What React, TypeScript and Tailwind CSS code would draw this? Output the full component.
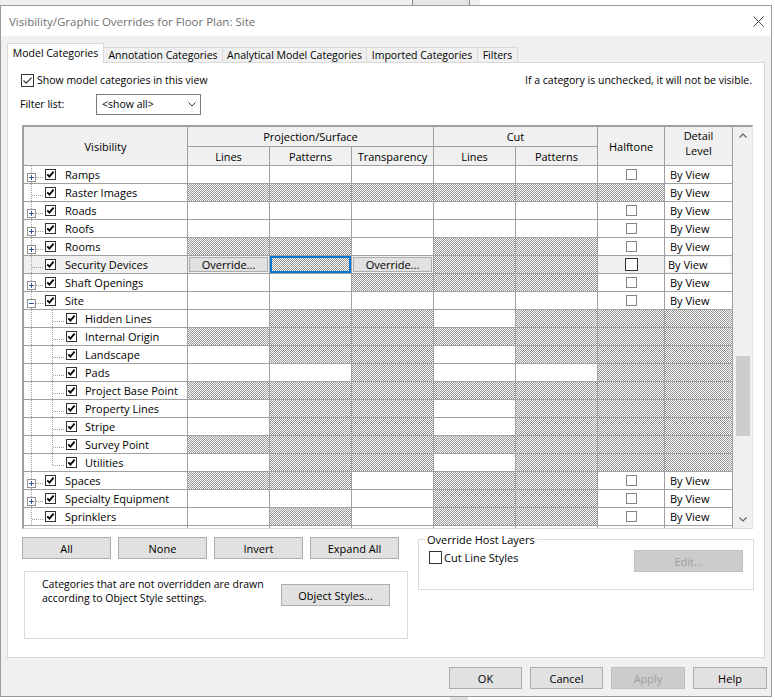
import React from "react";

const HATCH =
  "[background-image:repeating-conic-gradient(#969696_0%_25%,#ffffff_0%_50%)] [background-size:2px_2px]";
const COLS =
  "grid grid-cols-[164px_82px_82px_82px_82px_82px_67px_68px]";

interface Row {
  name: string;
  level: 0 | 1;
  toggle?: "+" | "-";
  fills: string; // proj lines, proj patterns, transparency, cut lines, cut patterns
  halftone: "box" | "h";
  detail: boolean;
  last?: boolean;
  focus?: boolean;
}

const ROWS: Row[] = [
  { name: "Ramps", level: 0, toggle: "+", fills: "wwwww", halftone: "box", detail: true },
  { name: "Raster Images", level: 0, fills: "hhhhh", halftone: "h", detail: true },
  { name: "Roads", level: 0, toggle: "+", fills: "wwwww", halftone: "box", detail: true },
  { name: "Roofs", level: 0, toggle: "+", fills: "wwwww", halftone: "box", detail: true },
  { name: "Rooms", level: 0, toggle: "+", fills: "hhwhh", halftone: "box", detail: true },
  { name: "Security Devices", level: 0, fills: "whwhh", halftone: "box", detail: true, focus: true },
  { name: "Shaft Openings", level: 0, toggle: "+", fills: "wwhhh", halftone: "box", detail: true },
  { name: "Site", level: 0, toggle: "-", fills: "wwwww", halftone: "box", detail: true },
  { name: "Hidden Lines", level: 1, fills: "whhwh", halftone: "h", detail: false },
  { name: "Internal Origin", level: 1, fills: "hhhhh", halftone: "h", detail: false },
  { name: "Landscape", level: 1, fills: "whhwh", halftone: "h", detail: false },
  { name: "Pads", level: 1, fills: "wwhww", halftone: "h", detail: false },
  { name: "Project Base Point", level: 1, fills: "hhhhh", halftone: "h", detail: false },
  { name: "Property Lines", level: 1, fills: "whhwh", halftone: "h", detail: false },
  { name: "Stripe", level: 1, fills: "whhwh", halftone: "h", detail: false },
  { name: "Survey Point", level: 1, fills: "hhhhh", halftone: "h", detail: false },
  { name: "Utilities", level: 1, fills: "whhwh", halftone: "h", detail: false, last: true },
  { name: "Spaces", level: 0, toggle: "+", fills: "hhwhh", halftone: "box", detail: true },
  { name: "Specialty Equipment", level: 0, toggle: "+", fills: "wwwhh", halftone: "box", detail: true },
  { name: "Sprinklers", level: 0, fills: "whwhh", halftone: "box", detail: true },
];

function TreeCheck() {
  return (
    <span className="flex h-[11px] w-[11px] shrink-0 items-center justify-center border border-[#333333] bg-white">
      <svg width="9" height="9" viewBox="0 0 9 9" fill="none">
        <path d="M1.3 4.4 L3.4 6.6 L7.6 1.6" stroke="#000" strokeWidth="1.8" />
      </svg>
    </span>
  );
}

function TreeLines({ row }: { row: Row }) {
  const dot = { stroke: "#a0a0a0", strokeDasharray: "1 1" };
  const y = 11.5;
  return (
    <svg
      className="pointer-events-none absolute left-0 top-0"
      width="44"
      height="17"
      viewBox="0 0 44 17"
      fill="none"
    >
      <line x1="7.5" y1="0" x2="7.5" y2="17" {...dot} />
      {row.level === 0 && <line x1={row.toggle ? 12 : 8} y1={y} x2="20" y2={y} {...dot} />}
      {row.level === 1 && (
        <>
          <line x1="28.5" y1="0" x2="28.5" y2={row.last ? y : 17} {...dot} />
          <line x1="29" y1={y} x2="41" y2={y} {...dot} />
        </>
      )}
      {row.toggle === "-" && <line x1="28.5" y1="15" x2="28.5" y2="17" {...dot} />}
      {row.toggle && (
        <g>
          <rect x="3.5" y="7.5" width="8" height="8" fill="#fff" stroke="#919191" />
          <line x1="5" y1="11.5" x2="10" y2="11.5" stroke="#2b5797" />
          {row.toggle === "+" && <line x1="7.5" y1="9" x2="7.5" y2="14" stroke="#2b5797" />}
        </g>
      )}
    </svg>
  );
}

function OverrideButton() {
  return (
    <div className="flex h-full items-center justify-center border border-[#adadad] bg-[#e1e1e1]">
      Override...
    </div>
  );
}

const CELL = "border-r border-b border-[#a0a0a0]";

function GridRow({ row }: { row: Row }) {
  const f = row.fills.split("");

  if (row.focus) {
    return (
      <div className={`${COLS} h-[18px]`}>
        <div className={`${CELL} relative flex items-center bg-[#f0f0f0] pl-[21px]`}>
          <TreeLines row={row} />
          <TreeCheck />
          <span className="ml-[9px] whitespace-nowrap">{row.name}</span>
        </div>
        <div className={`${CELL} bg-[#f0f0f0] p-px`}>
          <OverrideButton />
        </div>
        <div className={`${CELL} bg-white`}>
          <div className={`h-full border-2 border-[#0078d7] ${HATCH}`} />
        </div>
        <div className={`${CELL} bg-[#f0f0f0] p-px`}>
          <OverrideButton />
        </div>
        <div className={`${CELL} ${HATCH}`} />
        <div className={`${CELL} ${HATCH}`} />
        <div className={`${CELL} flex items-center justify-center bg-[#f0f0f0]`}>
          <span className="h-[13px] w-[13px] border border-[#333333] bg-white" />
        </div>
        <div className={`${CELL} bg-[#f0f0f0] py-px pl-px pr-[2px]`}>
          <div className="flex h-full items-center bg-white pl-[2px]">By View</div>
        </div>
      </div>
    );
  }

  return (
    <div className={`${COLS} h-[18px]`}>
      <div
        className={`${CELL} relative flex items-center bg-white ${
          row.level === 0 ? "pl-[21px]" : "pl-[42px]"
        }`}
      >
        <TreeLines row={row} />
        <TreeCheck />
        <span className={`whitespace-nowrap ${row.level === 0 ? "ml-[9px]" : "ml-[8px]"}`}>
          {row.name}
        </span>
      </div>
      {f.map((c, i) => (
        <div key={i} className={`${CELL} ${c === "h" ? HATCH : "bg-white"}`} />
      ))}
      {row.halftone === "box" ? (
        <div className={`${CELL} flex items-center justify-center bg-white`}>
          <span className="h-[11px] w-[11px] border border-[#858585] bg-white" />
        </div>
      ) : (
        <div className={`${CELL} ${HATCH}`} />
      )}
      {row.detail ? (
        <div className={`${CELL} flex items-center bg-white pl-[5px]`}>By View</div>
      ) : (
        <div className={`${CELL} ${HATCH}`} />
      )}
    </div>
  );
}

function HeadCell({ className = "", children }: { className?: string; children: React.ReactNode }) {
  return (
    <div
      className={`flex justify-center border-r border-b border-[#a0a0a0] text-center ${className}`}
    >
      {children}
    </div>
  );
}

function Chevron({ up }: { up?: boolean }) {
  return (
    <svg width="8" height="5" viewBox="0 0 8 5" fill="none">
      <path
        d={up ? "M0.5 4.5 L4 1 L7.5 4.5" : "M0.5 0.5 L4 4 L7.5 0.5"}
        stroke="#606060"
        strokeWidth="1.2"
      />
    </svg>
  );
}

function CategoryGrid() {
  return (
    <div className="ml-[14px] mt-[10px] flex h-[404px] w-[731px] border-l-2 border-t-2 border-r border-b border-l-[#a0a0a0] border-t-[#a0a0a0] border-r-[#e3e3e3] border-b-[#d8d8d8]">
      <div className="w-[709px]">
        <div className={`${COLS} grid-rows-[20px_19px] bg-[#f0f0f0]`}>
          <HeadCell className="row-span-2 items-center">Visibility</HeadCell>
          <HeadCell className="col-span-3 items-center">Projection/Surface</HeadCell>
          <HeadCell className="col-span-2 items-center">Cut</HeadCell>
          <HeadCell className="row-span-2 items-center">Halftone</HeadCell>
          <HeadCell className="row-span-2 items-start pt-px leading-[15px]">
            Detail
            <br />
            Level
          </HeadCell>
          <HeadCell className="items-center">Lines</HeadCell>
          <HeadCell className="items-center">Patterns</HeadCell>
          <HeadCell className="items-center">Transparency</HeadCell>
          <HeadCell className="items-center">Lines</HeadCell>
          <HeadCell className="items-center">Patterns</HeadCell>
        </div>
        <div className="h-[362px] overflow-hidden bg-white">
          {ROWS.map((r) => (
            <GridRow key={r.name} row={r} />
          ))}
          <div className={`${COLS} h-[18px]`}>
            {Array.from({ length: 8 }).map((_, i) => (
              <div key={i} className={`${CELL} bg-white`} />
            ))}
          </div>
        </div>
      </div>
      <div className="flex w-[19px] flex-col bg-[#f0f0f0]">
        <div className="flex h-[17px] items-center justify-center">
          <Chevron up />
        </div>
        <div className="flex-1 pt-[212px]">
          <div className="ml-[3px] h-[80px] w-[14px] bg-[#cdcdcd]" />
        </div>
        <div className="flex h-[17px] items-center justify-center">
          <Chevron />
        </div>
      </div>
    </div>
  );
}

function Btn({
  children,
  className = "",
  disabled,
}: {
  children: React.ReactNode;
  className?: string;
  disabled?: boolean;
}) {
  return (
    <div
      className={`flex h-[22px] items-center justify-center border ${
        disabled
          ? "border-[#bfbfbf] bg-[#cccccc] text-[#a0a0a0]"
          : "border-[#adadad] bg-[#e1e1e1] text-black"
      } ${className}`}
    >
      {children}
    </div>
  );
}

const TABS = [
  { label: "Annotation Categories", w: "w-[119px]" },
  { label: "Analytical Model Categories", w: "w-[144px]" },
  { label: "Imported Categories", w: "w-[111px]" },
  { label: "Filters", w: "w-[40px]" },
];

function Panel() {
  return (
    <div className="flex h-[596px] w-[758px] flex-col border border-[#d9d9d9] bg-white">
      <div className="mt-[10px] flex h-[14px] items-center pl-[13px] pr-[12px] text-[10.5px]">
        <span className="flex h-[13px] w-[13px] items-center justify-center border border-[#333333] bg-white">
          <svg width="11" height="11" viewBox="0 0 11 11" fill="none">
            <path d="M1.5 5.5 L4.2 8.2 L9.6 2.6" stroke="#333" strokeWidth="1.1" />
          </svg>
        </span>
        <span className="ml-[3px]">Show model categories in this view</span>
        <span className="ml-auto">If a category is unchecked, it will not be visible.</span>
      </div>
      <div className="mt-[7px] flex h-[21px] items-center pl-[12px] text-[10.5px]">
        <span className="w-[76px]">Filter list:</span>
        <div className="flex h-[21px] w-[105px] items-center justify-between border border-[#7a7a7a] bg-white pl-[5px] pr-[4px]">
          <span>&lt;show all&gt;</span>
          <svg width="8" height="5" viewBox="0 0 8 5" fill="none">
            <path d="M0.5 0.5 L4 4 L7.5 0.5" stroke="#333" strokeWidth="1" />
          </svg>
        </div>
      </div>
      <CategoryGrid />
      <div className="ml-[14px] flex items-start">
        <div className="w-[386px]">
          <div className="mt-[8px] flex gap-[7px]">
            <Btn className="w-[89px]">All</Btn>
            <Btn className="w-[89px]">None</Btn>
            <Btn className="w-[89px]">Invert</Btn>
            <Btn className="w-[89px]">Expand All</Btn>
          </div>
          <div className="ml-[2px] mt-[12px] flex h-[68px] w-[384px] border border-[#dcdcdc] pl-[17px] pr-[17px] pt-[6px]">
            <div className="flex flex-col gap-px whitespace-nowrap text-[10.5px] leading-[13px]">
              <span>Categories that are not overridden are drawn</span>
              <span>according to Object Style settings.</span>
            </div>
            <Btn className="ml-auto mt-[6px] w-[109px]">Object Styles...</Btn>
          </div>
        </div>
        <div className="relative ml-[10px] mt-[10px] flex h-[51px] w-[336px] items-start border border-[#dcdcdc] pl-[10px] pr-[10px] pt-[11px]">
          <span className="absolute left-[6px] top-[-7px] bg-white px-[2px]">Override Host Layers</span>
          <span className="h-[13px] w-[13px] border border-[#333333] bg-white" />
          <span className="ml-[2px]">Cut Line Styles</span>
          <Btn disabled className="ml-auto mt-[-1px] w-[109px]">
            Edit...
          </Btn>
        </div>
      </div>
    </div>
  );
}

function Dialog() {
  return (
    <div className="flex h-[692px] w-[772px] flex-col border border-[#9b9b9b] bg-[#f0f0f0]">
      <div className="flex h-[30px] items-center justify-between bg-white pl-[8px] pr-[7px]">
        <span className="text-[11.5px] text-[#6f6f6f]">
          Visibility/Graphic Overrides for Floor Plan: Site
        </span>
        <svg width="11" height="11" viewBox="0 0 11 11" fill="none">
          <path d="M0.5 0.5 L10.5 10.5 M10.5 0.5 L0.5 10.5" stroke="#444" strokeWidth="1" />
        </svg>
      </div>
      <div className="pl-[6px] pt-[6px]">
        <div className="flex h-[20px] items-end text-[10.5px]">
          <div className="relative z-10 -mb-px flex h-[20px] w-[97px] items-center justify-center border border-b-0 border-[#d9d9d9] bg-white pb-px">
            Model Categories
          </div>
          {TABS.map((t) => (
            <div
              key={t.label}
              className={`flex h-[15px] items-center justify-center whitespace-nowrap border-r border-t border-[#d9d9d9] bg-[#f0f0f0] ${t.w}`}
            >
              {t.label}
            </div>
          ))}
        </div>
        <Panel />
      </div>
      <div className="mt-[9px] flex justify-end gap-[8px] pr-[4px]">
        <Btn className="w-[73px]">OK</Btn>
        <Btn className="w-[73px]">Cancel</Btn>
        <Btn disabled className="w-[74px]">
          Apply
        </Btn>
        <Btn className="w-[74px]">Help</Btn>
      </div>
    </div>
  );
}

export default function App() {
  return (
    <div className="relative h-[700px] w-[775px] overflow-hidden bg-white font-['Open_Sans',sans-serif] text-[11px] leading-[13px] text-black">
      <div className="flex h-[5px] bg-[#f0f0f0]">
        <div className="ml-[412px] w-[58px] border-x border-[#8a8a8a] bg-[#e6e6e6]" />
        <div className="ml-[10px] flex-1 bg-white" />
      </div>
      <div className="flex">
        <Dialog />
        <div className="flex-1 bg-white" />
      </div>
      <div className="flex h-[3px] bg-white">
        <div className="ml-[450px] w-[18px] bg-[#e0e0e0]" />
      </div>
    </div>
  );
}
